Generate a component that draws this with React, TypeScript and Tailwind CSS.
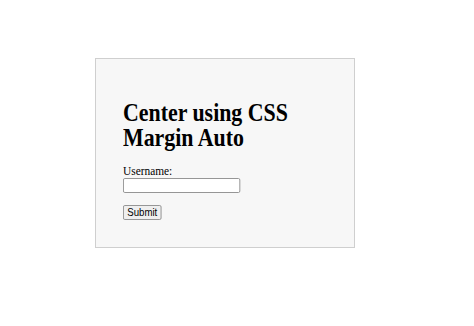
export default function App() {
  return (
    <div className="w-[474px] h-[326px] bg-white overflow-hidden">
      <div className="w-[449px] pt-[58px]">
        <div className="mx-auto w-[260px] h-[190px] border border-[#cfcfcf] bg-[#f7f7f7] px-[27px] pt-[41px] font-['Liberation_Serif',serif] text-black">
          {/* the screenshot is squeezed sideways, so the content is too */}
          <div className="w-[233px] origin-left scale-x-[0.875]">
            <h1 className="text-[25px] leading-[25px] font-bold">Center using CSS Margin Auto</h1>
            <form className="mt-[13px]">
              <label className="block text-[13px] leading-[15px]">Username:</label>
              <input
                type="text"
                className="block w-[134px] h-[15px] border border-[#8f8f8f] bg-white rounded-[2px]"
              />
              <button
                type="button"
                className="mt-[12px] h-[15px] w-[44px] border border-[#8f8f8f] bg-[#efefef] rounded-[2px] font-['Liberation_Sans',sans-serif] text-[11px] leading-[13px]"
              >
                Submit
              </button>
            </form>
          </div>
        </div>
      </div>
    </div>
  );
}
